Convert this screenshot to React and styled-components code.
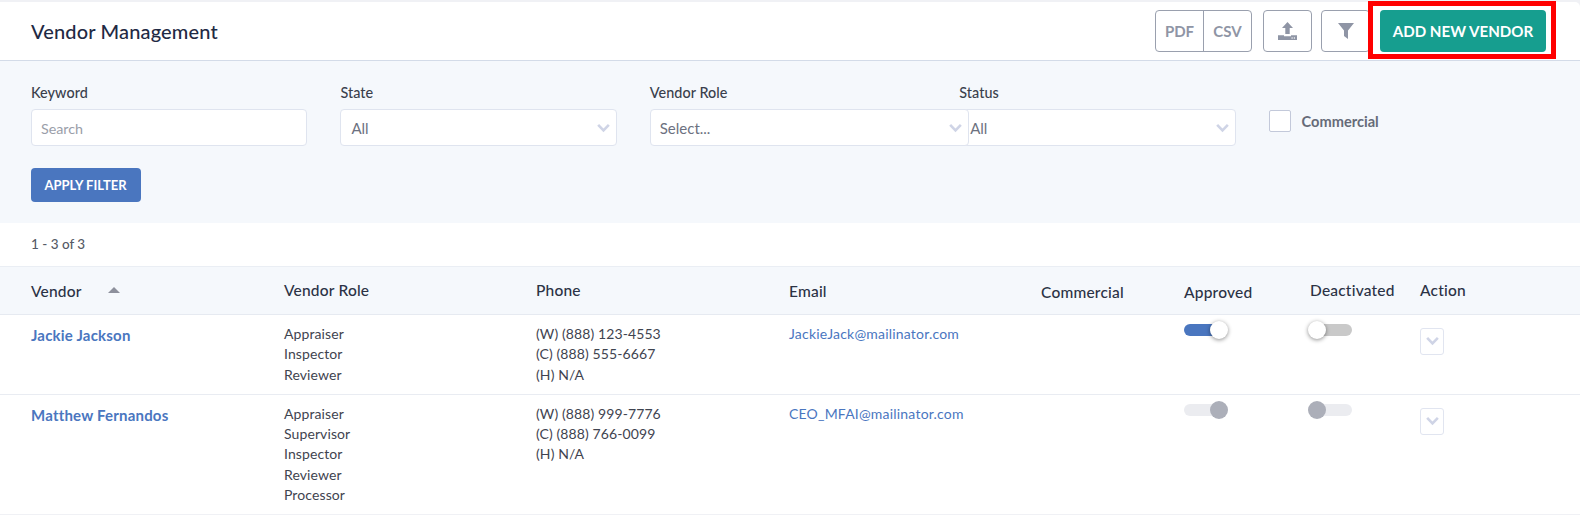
import styled, { createGlobalStyle } from 'styled-components';

const GlobalStyle = createGlobalStyle`
	html, body {
		margin: 0;
		height: 515px;
		overflow: hidden;
		background: #fff;
		font-family: Lato, "Open Sans", sans-serif;
		color: #2b3245;
	}
	* {
		box-sizing: border-box;
	}
`;

const Page = styled.div`
	width: 1580px;
	height: 515px;
	overflow: hidden;
	background: #f0f1f5;
	padding-top: 2px;
`;

const Main = styled.div`
	background: #fff;
	border-radius: 0 5px 0 0;
`;

const Header = styled.header`
	display: flex;
	align-items: center;
	height: 59px;
	padding: 0 34px 1px 31px;
	border-bottom: 1px solid #d3dbe8;
`;

const Title = styled.h1`
	margin: 0;
	font-size: 20px;
	font-weight: 500;
	letter-spacing: 0.15px;
	color: #1f2a44;
`;

const Actions = styled.div`
	display: flex;
	margin-left: auto;
`;

const ExportGroup = styled.div`
	display: flex;
	width: 97px;
	height: 42px;
	border: 1px solid #9aa0ae;
	border-radius: 4px;
`;

const ExportButton = styled.div`
	flex: 1;
	display: flex;
	align-items: center;
	justify-content: center;
	font-size: 15px;
	font-weight: 700;
	color: #8f95a5;
	& + & {
		border-left: 1px solid #9aa0ae;
	}
`;

const IconButton = styled.div`
	display: flex;
	align-items: center;
	justify-content: center;
	width: 49px;
	height: 42px;
	margin-left: ${props => props.$gap}px;
	border: 1px solid #9aa0ae;
	border-radius: 4px;
`;

const AddButton = styled.div`
	position: relative;
	display: flex;
	align-items: center;
	justify-content: center;
	width: 166px;
	height: 42px;
	margin-left: 10px;
	border-radius: 4px;
	background: #169e8f;
	color: #fff;
	font-size: 15.1px;
	font-weight: 700;
	&::after {
		content: '';
		position: absolute;
		top: -9px;
		left: -12px;
		right: -10px;
		bottom: -7px;
		border: 5px solid #f00;
	}
`;

const FilterPanel = styled.section`
	height: 162px;
	padding: 23px 0 0 31px;
	background: #f5f8fc;
`;

const FilterGrid = styled.div`
	display: grid;
	grid-template-columns: repeat(5, 309.4px);
`;

const Field = styled.div`
	display: flex;
	flex-direction: column;
`;

const Label = styled.label`
	height: 25px;
	font-size: 14.4px;
	font-weight: 500;
	line-height: 18px;
	letter-spacing: 0.05px;
	color: #3a3f4c;
`;

const SearchInput = styled.input`
	width: 276px;
	height: 37px;
	padding: 1px 9px 0;
	border: 1px solid #dfe4ef;
	border-radius: 4px;
	background: #fff;
	font-family: inherit;
	font-size: 14.3px;
	outline: none;
	&::placeholder {
		color: #9a9ea9;
		opacity: 1;
	}
`;

const SelectBox = styled.div`
	position: relative;
	z-index: ${props => (props.$wide ? 1 : 0)};
	display: flex;
	align-items: center;
	justify-content: space-between;
	width: ${props => (props.$wide ? '319px' : '277px')};
	height: 37px;
	padding: 1px 5px 0 ${props => (props.$wide ? '9px' : '10px')};
	border: 1px solid #dfe4ef;
	border-radius: 4px;
	background: #fff;
	font-size: 15px;
	color: #6c7180;
`;

const CheckField = styled.div`
	display: flex;
	align-items: center;
	gap: 11px;
	margin-top: 26px;
	height: 22px;
`;

const CheckBox = styled.div`
	width: 22px;
	height: 22px;
	border: 1px solid #c3c9da;
	border-radius: 2px;
	background: #fff;
`;

const CheckLabel = styled.span`
	font-size: 14.6px;
	font-weight: 700;
	color: #666b78;
`;

const ApplyButton = styled.div`
	display: flex;
	align-items: center;
	justify-content: center;
	width: 110px;
	height: 34px;
	margin-top: 22px;
	padding-right: 1px;
	border-radius: 4px;
	background: #4a76bf;
	color: #fff;
	font-size: 13px;
	font-weight: 700;
`;

const Count = styled.div`
	height: 43px;
	padding-left: 31px;
	font-size: 13.5px;
	font-weight: 500;
	line-height: 43px;
	color: #555a66;
`;

const Columns = styled.div`
	display: grid;
	grid-template-columns: 253px 252px 253px 252px 143px 126px 110px 1fr;
	padding-left: 31px;
`;

const TableHead = styled(Columns)`
	height: 49px;
	border-top: 1px solid #eaeef4;
	border-bottom: 1px solid #e6eaf1;
	background: #f5f8fc;
`;

const HeadCell = styled.div`
	display: flex;
	align-items: center;
	height: 46px;
	padding-top: ${props => props.$shift || 0}px;
	font-size: 15.5px;
	font-weight: 500;
	letter-spacing: 0.2px;
	color: #2b3245;
`;

const SortArrow = styled.span`
	width: 0;
	height: 0;
	margin: 0 0 2px 26px;
	border-left: 6px solid transparent;
	border-right: 6px solid transparent;
	border-bottom: 6px solid #8d909c;
`;

const Row = styled(Columns)`
	padding-top: 9px;
	padding-bottom: 9px;
	border-bottom: 1px solid #e9ecf2;
	font-size: 14px;
	line-height: 20.25px;
	letter-spacing: 0.1px;
	color: #3f4450;
	&:last-child {
		border-bottom: none;
	}
`;

const VendorName = styled.a`
	padding-top: 1px;
	font-size: 15px;
	font-weight: 700;
	letter-spacing: 0.2px;
	color: #4a76bf;
`;

const Lines = styled.div`
	display: flex;
	flex-direction: column;
`;

const Email = styled.a`
	letter-spacing: 0.2px;
	color: #4a76bf;
`;

const Toggle = styled.div`
	position: relative;
	width: 42px;
	height: 12px;
	border-radius: 6px;
	background: ${props => {
		if (props.$disabled) return '#ebecf0';
		return props.$on ? '#4a76bf' : '#c9c9c9';
	}};
`;

const Knob = styled.span`
	position: absolute;
	top: -3px;
	${props => (props.$on ? 'right: -2px;' : 'left: -2px;')}
	width: 18px;
	height: 18px;
	border-radius: 50%;
	background: ${props => (props.$disabled ? '#acafb9' : '#fff')};
	box-shadow: ${props => (props.$disabled ? 'none' : '0 1px 4px rgba(0, 0, 0, 0.45)')};
`;

const ActionButton = styled.div`
	display: flex;
	align-items: center;
	justify-content: center;
	width: 24px;
	height: 27px;
	margin-top: 4px;
	border: 1px solid #e1e5f0;
	border-radius: 3px;
`;

const ChevronWrap = styled.span`
	display: flex;
	margin-top: -2px;
`;

const Chevron = ({ color = '#cfd4e6', size = 15 }) => (
	<ChevronWrap>
		<svg width={size} height={size} viewBox="0 0 14 14" fill="none">
			<path d="M2 4.5 7 9.8l5-5.3" stroke={color} strokeWidth="2.4" />
		</svg>
	</ChevronWrap>
);

const UploadIcon = () => (
	<svg width="19" height="18" viewBox="0 0 19 18" fill="#8f95a5">
		<path d="M9.5 0 15 6h-3.3v6H7.3V6H4z" />
		<path d="M0 13.2h6v1h7v-1h6V18H0z" />
		<rect x="13.5" y="15.4" width="1.2" height="1.2" fill="#fff" />
		<rect x="15.8" y="15.4" width="1.2" height="1.2" fill="#fff" />
	</svg>
);

const FunnelIcon = () => (
	<svg width="16" height="16" viewBox="0 0 16 16" fill="#8f95a5">
		<path d="M0 0h16L10 7.5V16L6 13V7.5z" />
	</svg>
);

const vendors = [
	{
		name: 'Jackie Jackson',
		roles: ['Appraiser', 'Inspector', 'Reviewer'],
		phones: ['(W) (888) 123-4553', '(C) (888) 555-6667', '(H) N/A'],
		email: 'JackieJack@mailinator.com',
		approved: true,
		disabled: false,
	},
	{
		name: 'Matthew Fernandos',
		roles: ['Appraiser', 'Supervisor', 'Inspector', 'Reviewer', 'Processor'],
		phones: ['(W) (888) 999-7776', '(C) (888) 766-0099', '(H) N/A'],
		email: 'CEO_MFAI@mailinator.com',
		approved: true,
		disabled: true,
	},
];

export default function App() {
	return (
		<Page>
			<GlobalStyle />
			<Main>
				<Header>
					<Title>Vendor Management</Title>
					<Actions>
						<ExportGroup>
							<ExportButton>PDF</ExportButton>
							<ExportButton>CSV</ExportButton>
						</ExportGroup>
						<IconButton $gap={11}>
							<UploadIcon />
						</IconButton>
						<IconButton $gap={9}>
							<FunnelIcon />
						</IconButton>
						<AddButton>ADD NEW VENDOR</AddButton>
					</Actions>
				</Header>
				<FilterPanel>
					<FilterGrid>
						<Field>
							<Label>Keyword</Label>
							<SearchInput placeholder="Search" />
						</Field>
						<Field>
							<Label>State</Label>
							<SelectBox>
								All
								<Chevron />
							</SelectBox>
						</Field>
						<Field>
							<Label>Vendor Role</Label>
							<SelectBox $wide>
								Select...
								<Chevron />
							</SelectBox>
						</Field>
						<Field>
							<Label>Status</Label>
							<SelectBox>
								All
								<Chevron />
							</SelectBox>
						</Field>
						<CheckField>
							<CheckBox />
							<CheckLabel>Commercial</CheckLabel>
						</CheckField>
					</FilterGrid>
					<ApplyButton>APPLY FILTER</ApplyButton>
				</FilterPanel>
				<Count>1 - 3 of 3</Count>
				<TableHead>
					<HeadCell $shift={2}>
						Vendor
						<SortArrow />
					</HeadCell>
					<HeadCell>Vendor Role</HeadCell>
					<HeadCell>Phone</HeadCell>
					<HeadCell $shift={2}>Email</HeadCell>
					<HeadCell $shift={3}>Commercial</HeadCell>
					<HeadCell $shift={3}>Approved</HeadCell>
					<HeadCell>Deactivated</HeadCell>
					<HeadCell>Action</HeadCell>
				</TableHead>
				{vendors.map(item => (
					<Row key={item.email}>
						<VendorName>{item.name}</VendorName>
						<Lines>
							{item.roles.map(role => (
								<span key={role}>{role}</span>
							))}
						</Lines>
						<Lines>
							{item.phones.map(phone => (
								<span key={phone}>{phone}</span>
							))}
						</Lines>
						<Email>{item.email}</Email>
						<div />
						<Toggle $on={item.approved} $disabled={item.disabled}>
							<Knob $on={item.approved} $disabled={item.disabled} />
						</Toggle>
						<Toggle $disabled={item.disabled}>
							<Knob $disabled={item.disabled} />
						</Toggle>
						<ActionButton>
							<Chevron />
						</ActionButton>
					</Row>
				))}
			</Main>
		</Page>
	);
}
